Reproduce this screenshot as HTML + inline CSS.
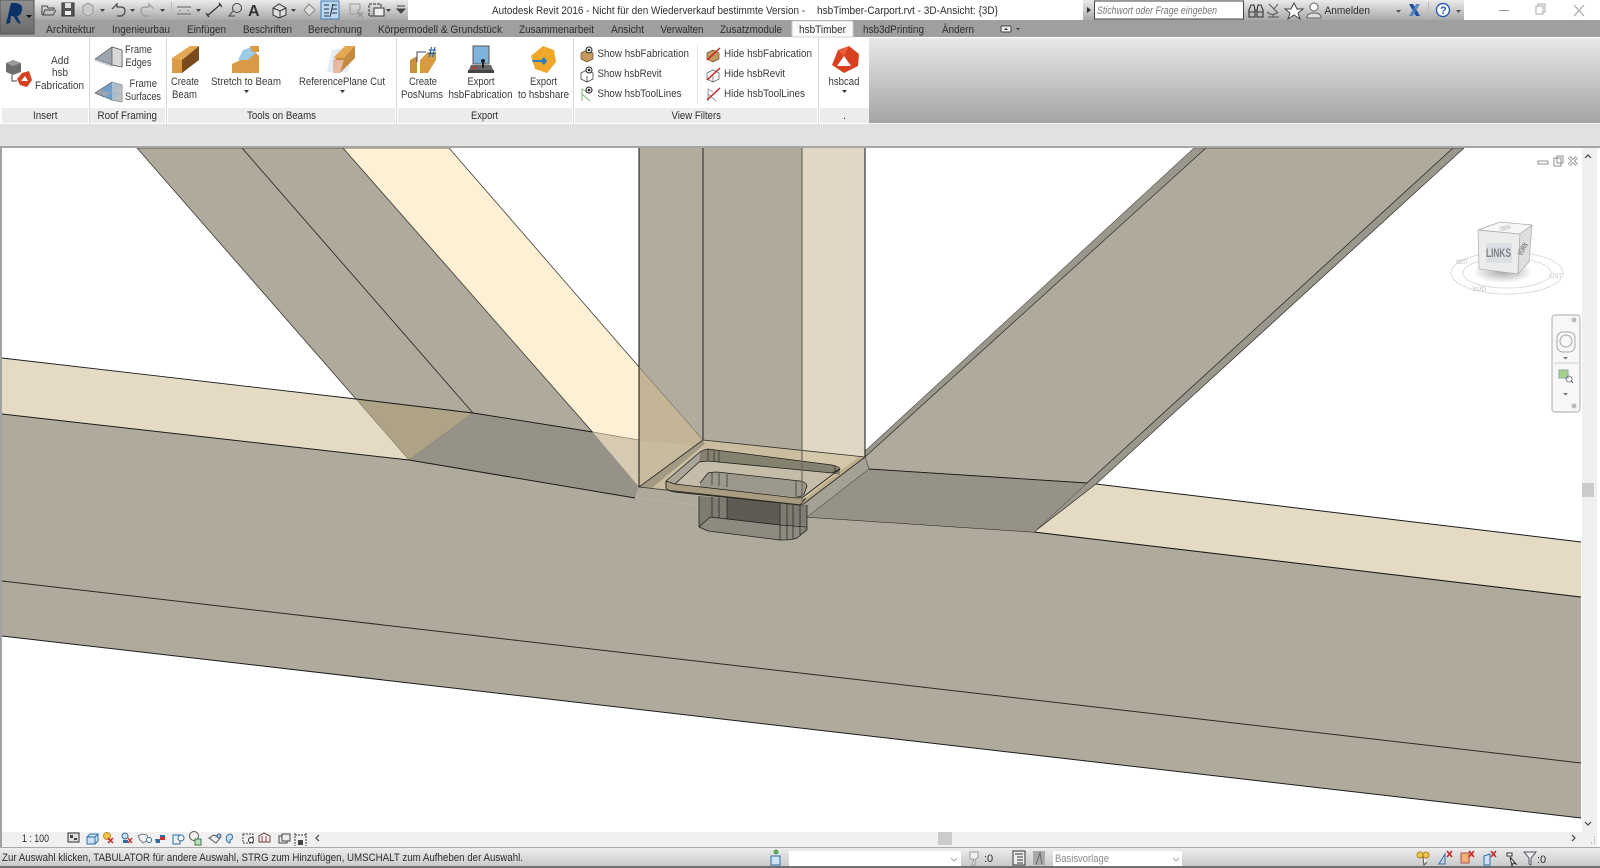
<!DOCTYPE html>
<html lang="de"><head><meta charset="utf-8"><title>Autodesk Revit 2016</title>
<style>
html,body{margin:0;padding:0;width:1600px;height:868px;overflow:hidden;background:#fff}
svg{display:block}
.b{filter:blur(.3px)}
text{font-family:"Liberation Sans",sans-serif;font-size:11px;fill:#3a3a3a}
.t{fill:#2e2e2e}
.l{fill:#555}
.g{stroke:#222;stroke-width:.8;fill:none}
</style></head><body>
<svg width="1600" height="868" viewBox="0 0 1600 868" xmlns="http://www.w3.org/2000/svg">
<defs>
<linearGradient id="qa" x1="0" y1="0" x2="0" y2="1"><stop offset="0" stop-color="#ebebeb"/><stop offset="1" stop-color="#a9a9a9"/></linearGradient>
<linearGradient id="rb" x1="0" y1="0" x2="0" y2="1"><stop offset="0" stop-color="#e8e8e8"/><stop offset="1" stop-color="#a4a4a4"/></linearGradient>
<linearGradient id="st" x1="0" y1="0" x2="0" y2="1"><stop offset="0" stop-color="#efefef"/><stop offset="1" stop-color="#c6c6c6"/></linearGradient>
<linearGradient id="lg" x1="0" y1="0" x2="0" y2="1"><stop offset="0" stop-color="#8f8f8f"/><stop offset="1" stop-color="#6a6a6a"/></linearGradient>
<radialGradient id="sh" cx=".5" cy=".5" r=".5"><stop offset="0" stop-color="#aaa"/><stop offset=".6" stop-color="#ddd"/><stop offset="1" stop-color="#fff"/></radialGradient>
</defs>
<rect width="1600" height="868" fill="#fff"/>

<!-- 3D VIEW -->
<g stroke-linejoin="round">
<polygon points="137,148 343,148 592.5,432 473,413 356,399" fill="#b0aa9c" stroke="#3a3a35" stroke-width=".8"/>
<line x1="242" y1="148" x2="473" y2="413" stroke="#2e2e2a" stroke-width=".9"/>
<polygon points="343,148 449,148 639,367 703,440 697,447 639,487 592.5,432" fill="#fdf0d5" stroke="#45423a" stroke-width=".8"/>
<polygon points="2,358 356,399 409,460 2,414" fill="#e5dac4"/>
<polygon points="356,399 473,413 409,460" fill="#aea287" stroke="#5a5548" stroke-width=".5"/>
<polygon points="473,413 592.5,432 639,487 635,498 409,460" fill="#969288"/>
<polygon points="592.5,432 639,440 639,487" fill="#d6cab3"/>
<polyline points="2,358 356,399 473,413 592.5,432" fill="none" stroke="#1c1c1c" stroke-width=".9"/>
<polyline points="592.5,432 639,440 703,449" fill="none" stroke="#8a8470" stroke-width=".7"/>

<!-- lower beam -->
<polygon points="2,414 409,460 635,498 807,517 1034,532 1581,597 1581,818 2,636" fill="#b0aa9c"/>
<polyline points="2,414 409,460 635,498" fill="none" stroke="#1c1c1c" stroke-width="1"/>
<polyline points="807,517 1034,532 1581,597" fill="none" stroke="#1c1c1c" stroke-width="1"/>
<line x1="2" y1="581" x2="800" y2="673" stroke="#2b2b28" stroke-width="1"/>
<line x1="800" y1="673" x2="1581" y2="763" stroke="#2b2b28" stroke-width="1"/>
<line x1="2" y1="636" x2="800" y2="728" stroke="#1c1c1c" stroke-width="1"/>
<line x1="800" y1="728" x2="1581" y2="818" stroke="#1c1c1c" stroke-width="1"/>

<!-- right rafter -->
<polygon points="1096,484 1581,542 1581,597 1034,532" fill="#e5dac4"/>
<polyline points="1096,484 1581,542" fill="none" stroke="#1c1c1c" stroke-width="1"/>
<polyline points="1034,532 1581,597" fill="none" stroke="#1c1c1c" stroke-width="1"/>
<polygon points="1194,148 1206,148 865,457 864,452" fill="#9b978c" stroke="#55524a" stroke-width=".6"/>
<polygon points="1206,148 1453,148 1087,483 869,469 865,457" fill="#b0aa9c" stroke="#33322d" stroke-width=".7"/>
<polygon points="1453,148 1464,148 1096,484 1034,532 1087,483" fill="#9b978c" stroke="#2e2e2a" stroke-width=".7"/>
<polygon points="869,469 1087,483 1034,532 807,517" fill="#969288"/>
<polyline points="869,469 1087,483" fill="none" stroke="#1c1c1c" stroke-width=".9"/>
<polygon points="802,505 865,457 869,469 807,517" fill="#a5a195" stroke="#55524a" stroke-width=".6"/>

<!-- column -->
<polygon points="639,148 703,148 703,440 639,367" fill="#b2ac9f"/>
<polygon points="639,367 703,440 697,447 639,440" fill="#c3b596"/>
<polygon points="639,440 697,447 639,487" fill="#c9bb9f"/>
<polygon points="703,148 802,148 802,451 703,440" fill="#b0aa9c"/>
<polygon points="802,148 865,148 865,457 802,451" fill="#e1d7c4"/>

<!-- top face -->
<polygon points="703,440 865,457 802,505 639,487" fill="#cbbd9f"/>
<polygon points="802,451 865,457 802,505" fill="#d8ccae" opacity=".7"/>
<polygon points="636,497 639,487 650,491" fill="#8f8f88"/>
<polygon points="635,498 639,487 802,505 807,517" fill="#b0aa9c"/>
<polygon points="639,487 703,440 705,444 652,488" fill="#a39a85"/>
<polygon points="802,505 865,457 860,456 800,502" fill="#bcae8e"/>

<!-- lower hole -->
<polygon points="699,496 807,505 807,530 797,538 780,540 708,531 699,527" fill="#7f7b71"/>
<polygon points="727,498 780,503 780,525 727,519" fill="#5e5b54"/>
<polygon points="699,527 710,517 780,525 807,525 797,538 780,540 708,531" fill="#8e8a80"/>
<path d="M699 527 L708 531 L780 540 Q792 540 797 538 L807 530 V505 M699 496 V527 L710 517 L780 525 L807 527" class="g"/>
<path d="M712 497V517M719 497V518M727 498V519M780 503V540M787 504V540M793 505V539M800 505V535" stroke="#1f1f1d" stroke-width=".7" fill="none"/>

<!-- upper ring -->
<polygon points="666,481 700,452 708,449 832,465 840,469 803,497 797,498 675,484" fill="#c5bcaa"/>
<polygon points="700,452 708,449 832,465 840,469 840,475 832,473 708,461 699,462" fill="#85816f"/>
<polygon points="666,481 700,452 699,462 675,484" fill="#aaa599"/>
<polygon points="700,483 708,473 717,472 800,481 807,485 803,495 797,497 700,487" fill="#9d988c"/>
<path d="M700 483 L708 473 Q712 472 717 472 L800 481 Q806 482 807 486 L804 494 Q801 497 797 497" stroke="#1f1f1d" stroke-width=".8" fill="none"/>
<path d="M712 472V485M719 473V486M727 474V487M796 481V497M802 482V497" stroke="#2e2e2b" stroke-width=".7" fill="none"/>
<polygon points="666,481 675,484 797,498 803,497 806,499 800,505 675,492 666,488" fill="#a99c80"/>
<path d="M666 481 L700 452 Q703 450 708 449 L832 465 Q840 467 840 469 L803 497 Q800 498 797 498 L675 484 Z" fill="none" stroke="#1f1f1d" stroke-width=".8"/>
<path d="M666 481V488Q668 491 675 492L800 505L806 498" fill="none" stroke="#1f1f1d" stroke-width=".9"/>
<path d="M675 484 L699 462 L708 461 L832 473 L840 469" fill="none" stroke="#1f1f1d" stroke-width=".8"/>
<path d="M708 449V461M714 450V461M719 450V462M835 466V474" stroke="#2e2e2b" stroke-width=".7" fill="none"/>

<!-- column edges & base -->
<polyline points="703,440 865,457 802,505 639,487 703,440" fill="none" stroke="#2e2e2a" stroke-width=".8"/>
<line x1="639" y1="148" x2="639" y2="487" stroke="#111" stroke-width="1"/>
<line x1="703" y1="148" x2="703" y2="440" stroke="#222" stroke-width="1"/>
<line x1="802" y1="148" x2="802" y2="505" stroke="#6d695f" stroke-width="1.200"/>
<line x1="865" y1="148" x2="865" y2="457" stroke="#111" stroke-width="1"/>
<line x1="639" y1="367" x2="703" y2="440" stroke="#55524a" stroke-width=".5"/>
</g>

<g class="b">
<!-- view cube -->
<ellipse cx="1507" cy="273" rx="56" ry="21" fill="#fff" stroke="#ccc" stroke-dasharray="2 1"/>
<ellipse cx="1507" cy="273" rx="44" ry="15" fill="#fff" stroke="#ddd"/>
<ellipse cx="1503" cy="272" rx="30" ry="11" fill="url(#sh)"/>
<polygon points="1478,230 1520,234 1518,274 1479,269" fill="#ececec" stroke="#aaa" stroke-width=".7"/>
<polygon points="1478,230 1500,222 1532,225 1520,234" fill="#f6f6f6" stroke="#aaa" stroke-width=".7"/>
<polygon points="1520,234 1532,225 1529,262 1518,274" fill="#dfdfdf" stroke="#aaa" stroke-width=".7"/>
<rect x="1486" y="243" width="26" height="20" fill="#dcdfe3"/>
<text x="1486" y="257" textLength="25" lengthAdjust="spacingAndGlyphs" style="fill:#7d8087;font-size:12px;font-weight:bold">LINKS</text>
<text transform="translate(1522,256) rotate(-62)" textLength="13" lengthAdjust="spacingAndGlyphs" style="fill:#7d8087;font-size:8px;font-weight:bold">VORN</text>
<text transform="translate(1500,231) rotate(-12)" textLength="11" lengthAdjust="spacingAndGlyphs" style="fill:#aaa;font-size:6px">OBEN</text>
<text x="1456" y="264" textLength="12" lengthAdjust="spacingAndGlyphs" style="fill:#bbb;font-size:6px">WEST</text>
<text x="1550" y="278" textLength="12" lengthAdjust="spacingAndGlyphs" style="fill:#bbb;font-size:6px">OST</text>
<text x="1472" y="291" textLength="14" lengthAdjust="spacingAndGlyphs" style="fill:#bbb;font-size:6px">SÜD</text>
<!-- nav bar -->
<rect x="1552" y="315" width="28" height="97" rx="3" fill="#f7f7f7" stroke="#b9b9b9" stroke-width="1.200"/>
<circle cx="1574" cy="320" r="2.500" fill="#bbb"/><circle cx="1574" cy="406" r="2.500" fill="#bbb"/>
<rect x="1557" y="332" width="18" height="20" rx="6" fill="none" stroke="#a8a8a8" stroke-width="1"/>
<circle cx="1566" cy="341" r="6" fill="none" stroke="#a8a8a8"/>
<path d="M1563 357h5l-2.500 2.500zM1563 393h5l-2.500 2.500z" fill="#777"/>
<line x1="1554" y1="363" x2="1578" y2="363" stroke="#ccc"/>
<rect x="1559" y="370" width="9" height="8" fill="#a9d18e" stroke="#8aa"/>
<circle cx="1569" cy="379" r="3" fill="none" stroke="#667" stroke-width=".8"/><line x1="1571" y1="381" x2="1573" y2="383" stroke="#667"/>
<!-- view win controls -->
<rect x="1538" y="161" width="10" height="3" fill="#fff" stroke="#777" stroke-width=".8"/>
<rect x="1554" y="158" width="7" height="8" fill="#fff" stroke="#777" stroke-width=".8"/><rect x="1557" y="156" width="6" height="7" fill="none" stroke="#777" stroke-width=".8"/>
<path d="M1569 157l8 8M1577 157l-8 8" stroke="#777" stroke-width="3"/><path d="M1569 157l8 8M1577 157l-8 8" stroke="#fff" stroke-width="1.400"/>

<!-- scrollbars -->
<rect x="1582" y="148" width="15" height="700" fill="#f0f0f0"/>
<rect x="1582" y="483" width="12" height="14" fill="#cbcbcb"/>
<path d="M1585 158l3-3 3 3M1585 822l3 3 3-3" fill="none" stroke="#444" stroke-width="1.200"/>
<rect x="0" y="832" width="1597" height="15" fill="#f0f0f0"/>
<rect x="938" y="832" width="14" height="13" fill="#cbcbcb"/>
<path d="M1572 835l3 3-3 3" fill="none" stroke="#444" stroke-width="1.200"/>
<path d="M319 835l-3 3 3 3" fill="none" stroke="#444" stroke-width="1.200"/>
<path d="M1591 843h1M1594 843h1M1594 840h1M1594 837h1" stroke="#aaa" stroke-width="1.500"/>
<rect x="0" y="148" width="2" height="700" fill="#a2a2a2"/>
<text x="22" y="842" textLength="27" lengthAdjust="spacingAndGlyphs" class="t">1 : 100</text>

<!-- view control icons -->
<g>
<rect x="68" y="833" width="11" height="9" fill="#ddd" stroke="#333"/><path d="M70 835h3v3h-3zM74 838h3v2h-3z" fill="#444"/>
<path d="M87 837l3-3h8v7l-3 3h-8zM87 837h8v7M95 837l3-3" fill="#cfe3f5" stroke="#2a6fa8"/>
<circle cx="107" cy="836" r="3.500" fill="#f2c54a" stroke="#b9902a"/><path d="M108 838l5 5M113 838l-5 5" stroke="#c22" stroke-width="1.500"/>
<circle cx="125" cy="836" r="3" fill="#cfe3f5" stroke="#2a6fa8"/><path d="M123 840h5v3h-5z" fill="#2a6fa8"/><path d="M128 838l4 5M132 838l-4 5" stroke="#c22" stroke-width="1.300"/>
<path d="M138 836l4-2 5 1 1 5-5 3-3-3z" fill="none" stroke="#778"/><circle cx="149" cy="840" r="2.500" fill="#fff" stroke="#2a6fa8"/>
<path d="M155 839h10v-4h-5v8h-4z" fill="#2a6fa8"/><rect x="160" y="837" width="5" height="3" fill="#c33"/>
<path d="M173 835h7v9h-7z" fill="none" stroke="#2a6fa8"/><circle cx="181" cy="838" r="3" fill="#fff" stroke="#2a6fa8"/>
<circle cx="194" cy="836" r="4.500" fill="none" stroke="#555"/><rect x="195" y="839" width="6" height="6" fill="#bfe0c0" stroke="#3a7a4a"/>
<path d="M209 838l5-3 6 3-4 5z" fill="none" stroke="#555"/><circle cx="219" cy="836" r="2" fill="#bcd" stroke="#357"/>
<path d="M230 834a2.500 3 0 0 1 0 6l0 3a2.500 3 0 0 1 0-9" fill="#cfe3f5" stroke="#2a6fa8"/>
<rect x="243" y="834" width="10" height="9" fill="none" stroke="#444" stroke-dasharray="2 1"/><circle cx="251" cy="840" r="2.500" fill="#fff" stroke="#333"/>
<path d="M259 842v-6l5-3 6 3v6z" fill="none" stroke="#644"/><path d="M262 836v6M266 836v6" stroke="#a44"/>
<rect x="279" y="836" width="8" height="7" fill="none" stroke="#444"/><rect x="282" y="834" width="8" height="7" fill="#eee" stroke="#444"/>
<path d="M295 833v13M306 833v13M295 835h11" fill="none" stroke="#333" stroke-dasharray="2 1"/><rect x="298" y="840" width="5" height="5" fill="#444"/>
</g>

<!-- status bar -->
<rect x="0" y="847" width="1600" height="21" fill="url(#st)"/>
<line x1="0" y1="847.500" x2="1600" y2="847.500" stroke="#a9a9a9"/>
<rect x="0" y="866" width="1600" height="2" fill="#6f6f6f"/>
<text x="2" y="861" textLength="521" lengthAdjust="spacingAndGlyphs" class="t">Zur Auswahl klicken, TABULATOR für andere Auswahl, STRG zum Hinzufügen, UMSCHALT zum Aufheben der Auswahl.</text>
<rect x="789" y="851" width="172" height="15" fill="#fff"/>
<path d="M951 858l3 3 3-3" fill="none" stroke="#aaa"/>
<rect x="1053" y="851" width="129" height="15" fill="#fff"/>
<text x="1055" y="862" textLength="54" lengthAdjust="spacingAndGlyphs" style="fill:#8a8a8a">Basisvorlage</text>
<path d="M1173 858l3 3 3-3" fill="none" stroke="#aaa"/>
<path d="M771 865v-9h9v9z" fill="#cfe3f5" stroke="#2a6fa8"/><circle cx="776" cy="852" r="2.500" fill="#5aa55a"/>
<path d="M970 852h8v5l-3 3v5h-3l2-6h-4z" fill="#f2f2f2" stroke="#999"/>
<text x="984" y="862" class="t">:0</text>
<rect x="1013" y="851" width="12" height="14" fill="#eee" stroke="#333"/><path d="M1015 854h8M1017 857h6M1017 860h6M1017 863h6" stroke="#333"/>
<rect x="1033" y="851" width="12" height="14" fill="#aaa"/><path d="M1036 864l4-11 2 11" fill="none" stroke="#666"/>
<circle cx="1420" cy="855" r="3" fill="#f2c54a" stroke="#a8842a"/><circle cx="1426" cy="855" r="3" fill="#f2c54a" stroke="#a8842a"/><path d="M1423 857l1 8 3-3" fill="#fff" stroke="#555"/>
<path d="M1439 864l6-10v10z" fill="none" stroke="#2a6fa8"/><path d="M1447 851l5 6M1452 851l-5 6" stroke="#c22" stroke-width="1.500"/>
<rect x="1461" y="853" width="8" height="10" fill="#f0b070" stroke="#a55"/><path d="M1469 851l5 6M1474 851l-5 6" stroke="#c22" stroke-width="1.500"/>
<path d="M1484 865v-9l6-2v11z" fill="#cfe3f5" stroke="#2a6fa8"/><path d="M1491 851l5 6M1496 851l-5 6" stroke="#c22" stroke-width="1.500"/>
<path d="M1507 853h5v3h-5zM1510 857l6 7-3-1-1 3z" fill="#fff" stroke="#333"/>
<path d="M1524 852h12l-5 6v7l-2-1v-6z" fill="#eee" stroke="#556"/>
<text x="1537" y="863" class="t">:0</text>

<!-- top chrome -->
<rect x="0" y="124" width="1600" height="22" fill="#e1e1e2"/>
<rect x="0" y="146" width="1600" height="2" fill="#a6a6a6"/>
<rect x="0" y="20" width="1600" height="17" fill="#9f9f9f"/>
<rect x="0" y="37" width="869" height="87" fill="#fff"/>
<rect x="869" y="38" width="731" height="85" fill="url(#rb)"/>
<rect x="869" y="123" width="731" height="1" fill="#f0f0f0"/>

<!-- panel strips -->
<g fill="#ececec">
<rect x="2" y="108" width="86" height="15"/><rect x="90" y="108" width="75" height="15"/><rect x="168" y="108" width="227" height="15"/><rect x="398" y="108" width="174" height="15"/><rect x="575" y="108" width="242" height="15"/><rect x="820" y="108" width="49" height="15"/>
</g>
<path d="M89.500 38v86M166.500 38v86M396.500 38v86M573.500 38v86M818.500 38v86" stroke="#d9d9d9"/>
<line x1="697.500" y1="44" x2="697.500" y2="104" stroke="#e4e4e4"/>

<!-- QAT -->
<rect x="0" y="0" width="408" height="20" fill="url(#qa)"/>
<rect x="0" y="0" width="34" height="34" fill="url(#lg)" stroke="#555"/>
<path d="M6 24L11 3h5q7 1 6 7t-5 6l4 8-3-1-5-7-2 0-1 7z" fill="#0e3268"/>
<path d="M26 15h6l-3 3z" fill="#111"/>
<path d="M42 15V6h5l1 2h6v2h-9l-2 5h10l3-5" fill="none" stroke="#444"/>
<rect x="62" y="3" width="12" height="13" fill="#555" stroke="#333"/><rect x="65" y="3" width="6" height="5" fill="#ddd"/><rect x="65" y="11" width="6" height="4" fill="#eee"/>
<path d="M83 6l5-3 5 3v7l-5 3-5-3z" fill="#ccc" stroke="#999"/>
<path d="M100 9h5l-2.500 3zM130 9h5l-2.500 3zM160 9h5l-2.500 3zM196 9h5l-2.500 3zM291 9h5l-2.500 3zM386 9h5l-2.500 3z" fill="#444"/>
<path d="M112 9l5-5v3h4q4 0 4 4t-4 5h-4" fill="none" stroke="#444" stroke-width="1.200"/>
<path d="M154 9l-5-5v3h-4q-4 0-4 4t4 5h4" fill="none" stroke="#999" stroke-width="1.200"/>
<line x1="171.500" y1="2" x2="171.500" y2="18" stroke="#bbb"/>
<path d="M177 7h14M177 14h14M180 10v1M188 10v1" stroke="#888" stroke-width="1.500"/>
<path d="M207 16l14-12M206 13l3 4M219 3l3 4" stroke="#333" stroke-width="1.200" fill="none"/>
<circle cx="237" cy="8" r="4.500" fill="none" stroke="#444"/><path d="M233 11l-4 5h6" fill="none" stroke="#444"/>
<text x="248" y="16" style="font-size:16px;font-weight:bold;fill:#333">A</text>
<path d="M273 8l6-4 7 4v7l-7 3-6-3z" fill="#ddd" stroke="#333"/><path d="M273 8l7 3 6-3M280 11v7" fill="none" stroke="#333"/>
<path d="M309 4l6 6-6 6-5-6z" fill="#ddd" stroke="#888"/>
<rect x="321" y="1" width="18" height="18" fill="#bcd7ee" stroke="#3e7db5"/>
<path d="M324 5h5M324 9h5M324 13h5M324 16h5M332 5h5M332 9h5M332 13h5M333 4l-3 13" stroke="#234" fill="none"/>
<path d="M350 4h10v6h-2v4h-8z" fill="none" stroke="#999"/><path d="M358 12l5 5M363 12l-5 5" stroke="#888"/>
<rect x="369" y="4" width="12" height="12" fill="none" stroke="#333" stroke-dasharray="3 1"/><rect x="374" y="8" width="10" height="8" fill="#eee" stroke="#333"/>
<path d="M397 6h8M397 9h8l-4 4z" fill="#444" stroke="#444"/>

<!-- title -->
<text x="492" y="14" textLength="313" lengthAdjust="spacingAndGlyphs" class="t">Autodesk Revit 2016 - Nicht für den Wiederverkauf bestimmte Version -</text>
<text x="817" y="14" textLength="181" lengthAdjust="spacingAndGlyphs" class="t">hsbTimber-Carport.rvt - 3D-Ansicht: {3D}</text>

<!-- search -->
<rect x="1083" y="0" width="381" height="20" fill="url(#qa)"/>
<path d="M1087 7l4 3-4 3z" fill="#333"/>
<rect x="1094.500" y="1" width="149" height="18" fill="#fff" stroke="#444"/>
<text x="1097" y="14" textLength="120" lengthAdjust="spacingAndGlyphs" style="font-style:italic;fill:#777">Stichwort oder Frage eingeben</text>
<path d="M1249 17v-7l2-5h3l1 5v7zM1255 10h2M1257 17v-7l1-5h3l2 5v7zM1249 12h6M1257 12h6" fill="none" stroke="#333" stroke-width="1.100"/>
<path d="M1269 4l9 9M1267 12q6 5 11 0M1273 14v3h-5h11M1278 4l-4 5" fill="none" stroke="#555"/>
<path d="M1294 3l3 6h6l-5 4 2 6-6-4-6 4 2-6-5-4h6z" fill="#fff" stroke="#444"/>
<circle cx="1314" cy="7" r="4" fill="#fff" stroke="#666"/><path d="M1307 18q0-5 7-5t7 5z" fill="#ddd" stroke="#666"/>
<text x="1324.500" y="14" textLength="45.500" lengthAdjust="spacingAndGlyphs" class="t">Anmelden</text>
<path d="M1396 10h5l-2.500 3zM1456 10h5l-2.500 3z" fill="#555"/>
<path d="M1409 4h4l7 12h-4z" fill="#1e4d9a"/><path d="M1420 4h-4l-7 12h4z" fill="#4a7cc2" opacity=".85"/>
<line x1="1428.500" y1="2" x2="1428.500" y2="18" stroke="#bbb"/>
<circle cx="1443" cy="10" r="6.500" fill="#fff" stroke="#2a5cb0" stroke-width="1.400"/>
<text x="1440" y="14" style="font-size:11px;font-weight:bold;fill:#2a5cb0">?</text>
<!-- window controls -->
<line x1="1499" y1="10.500" x2="1509" y2="10.500" stroke="#9a9a9a"/>
<rect x="1536" y="6" width="7" height="8" fill="#fff" stroke="#aaa"/><path d="M1538 6V4h7v8h-2" fill="none" stroke="#aaa"/>
<path d="M1574 5l10 11M1584 5l-10 11" stroke="#a2a2a2"/>

<!-- tabs -->
<path d="M792 37V22q0-1 2-1h57q2 0 2 1v15z" fill="#fafafa" stroke="#d0d0d0"/>
<g>
<text x="46" y="33" textLength="49" lengthAdjust="spacingAndGlyphs" class="t">Architektur</text>
<text x="112" y="33" textLength="58" lengthAdjust="spacingAndGlyphs" class="t">Ingenieurbau</text>
<text x="187" y="33" textLength="39" lengthAdjust="spacingAndGlyphs" class="t">Einfügen</text>
<text x="243" y="33" textLength="49" lengthAdjust="spacingAndGlyphs" class="t">Beschriften</text>
<text x="308" y="33" textLength="54" lengthAdjust="spacingAndGlyphs" class="t">Berechnung</text>
<text x="378" y="33" textLength="124" lengthAdjust="spacingAndGlyphs" class="t">Körpermodell &amp; Grundstück</text>
<text x="519" y="33" textLength="75" lengthAdjust="spacingAndGlyphs" class="t">Zusammenarbeit</text>
<text x="611" y="33" textLength="33" lengthAdjust="spacingAndGlyphs" class="t">Ansicht</text>
<text x="660.500" y="33" textLength="43" lengthAdjust="spacingAndGlyphs" class="t">Verwalten</text>
<text x="720" y="33" textLength="62" lengthAdjust="spacingAndGlyphs" class="t">Zusatzmodule</text>
<text x="799" y="33" textLength="47" lengthAdjust="spacingAndGlyphs" class="t">hsbTimber</text>
<text x="863" y="33" textLength="61" lengthAdjust="spacingAndGlyphs" class="t">hsb3dPrinting</text>
<text x="942" y="33" textLength="32" lengthAdjust="spacingAndGlyphs" class="t">Ändern</text>
</g>
<rect x="1001" y="26" width="10" height="6" rx="1" fill="#eee" stroke="#444"/><path d="M1004 30l2-2 2 2z" fill="#333"/><path d="M1016 28h4l-2 2z" fill="#333"/>

<!-- ribbon text -->
<g>
<text x="51" y="64" textLength="18" lengthAdjust="spacingAndGlyphs">Add</text>
<text x="52" y="76" textLength="16" lengthAdjust="spacingAndGlyphs">hsb</text>
<text x="35" y="89" textLength="49" lengthAdjust="spacingAndGlyphs">Fabrication</text>
<text x="125" y="53" textLength="27" lengthAdjust="spacingAndGlyphs">Frame</text>
<text x="125.500" y="66" textLength="26" lengthAdjust="spacingAndGlyphs">Edges</text>
<text x="129.500" y="87" textLength="27.500" lengthAdjust="spacingAndGlyphs">Frame</text>
<text x="125" y="100" textLength="36" lengthAdjust="spacingAndGlyphs">Surfaces</text>
<text x="171" y="85" textLength="28" lengthAdjust="spacingAndGlyphs">Create</text>
<text x="172" y="98" textLength="25" lengthAdjust="spacingAndGlyphs">Beam</text>
<text x="211" y="85" textLength="70" lengthAdjust="spacingAndGlyphs">Stretch to Beam</text>
<text x="299" y="85" textLength="86" lengthAdjust="spacingAndGlyphs">ReferencePlane Cut</text>
<text x="409" y="85" textLength="28" lengthAdjust="spacingAndGlyphs">Create</text>
<text x="401" y="98" textLength="42" lengthAdjust="spacingAndGlyphs">PosNums</text>
<text x="467.500" y="85" textLength="27" lengthAdjust="spacingAndGlyphs">Export</text>
<text x="448.500" y="98" textLength="64" lengthAdjust="spacingAndGlyphs">hsbFabrication</text>
<text x="530" y="85" textLength="27" lengthAdjust="spacingAndGlyphs">Export</text>
<text x="518" y="98" textLength="51" lengthAdjust="spacingAndGlyphs">to hsbshare</text>
<text x="597.500" y="57" textLength="91.500" lengthAdjust="spacingAndGlyphs">Show hsbFabrication</text>
<text x="597.500" y="77" textLength="64" lengthAdjust="spacingAndGlyphs">Show hsbRevit</text>
<text x="597.500" y="97" textLength="84" lengthAdjust="spacingAndGlyphs">Show hsbToolLines</text>
<text x="724" y="57" textLength="88" lengthAdjust="spacingAndGlyphs">Hide hsbFabrication</text>
<text x="724" y="77" textLength="61" lengthAdjust="spacingAndGlyphs">Hide hsbRevit</text>
<text x="724" y="97" textLength="81" lengthAdjust="spacingAndGlyphs">Hide hsbToolLines</text>
<text x="828.500" y="85" textLength="31" lengthAdjust="spacingAndGlyphs">hsbcad</text>
<text x="33" y="119" textLength="24.500" lengthAdjust="spacingAndGlyphs" class="t">Insert</text>
<text x="97.500" y="119" textLength="59.500" lengthAdjust="spacingAndGlyphs" class="t">Roof Framing</text>
<text x="247" y="119" textLength="69" lengthAdjust="spacingAndGlyphs" class="t">Tools on Beams</text>
<text x="471" y="119" textLength="27" lengthAdjust="spacingAndGlyphs" class="t">Export</text>
<text x="671.500" y="119" textLength="49.500" lengthAdjust="spacingAndGlyphs" class="t">View Filters</text>
<text x="843" y="119" class="t">.</text>
</g>
<path d="M244 90h5l-2.500 3zM340 90h5l-2.500 3zM842 90h5l-2.500 3z" fill="#333"/>

<!-- ribbon icons -->
<!-- add -->
<path d="M6 63l7-3 8 3v9l-8 3-7-3z" fill="#6d6d6d"/><path d="M6 63l7 3 8-3-8-3z" fill="#9a9a9a"/>
<path d="M12 75v6h5" fill="none" stroke="#444"/><path d="M17 79l5-6 7-2 3 9-5 7-7-2z" fill="#d9401f"/><path d="M21 81l4-5 3 5z" fill="#fff"/>
<!-- frame edges -->
<path d="M95 59l17-12 10 3v17l-10-2z" fill="#9aa5b0" stroke="#555" stroke-width=".7"/><path d="M95 59l17 6v2l-17-6z" fill="#c8ccd0"/><path d="M112 47l10 3-0 17-10-2z" fill="#d8d8d8" stroke="#555" stroke-width=".7"/>
<!-- frame surfaces -->
<path d="M95 93l17-11 10 3v17l-10-2z" fill="#9aa5b0" stroke="#555" stroke-width=".7"/><path d="M101 90l12-8 8 3-11 8zM104 97l10-6 7 2-8 7z" fill="#6f9fc8"/><path d="M112 82l10 3v17l-10-2z" fill="#d0d0d0" opacity=".6"/>
<!-- create beam -->
<polygon points="172,58 190,46 199,46 182,60" fill="#e2a853"/>
<polygon points="182,60 199,46 199,60 182,73" fill="#7a4a1e"/>
<polygon points="172,58 182,60 182,73 172,73" fill="#d89a42"/>
<!-- stretch -->
<polygon points="232,64 256,53 259,56 259,73 232,73" fill="#d89a42"/>
<polygon points="243,50 254,46 259,50 248,60 238,60" fill="#9ccbe8"/>
<polygon points="250,46 259,46 259,52 252,52" fill="#d89a42"/>
<!-- ref plane -->
<polygon points="332,50 355,46 348,72 327,72" fill="#dbe9f5" opacity=".8"/>
<polygon points="333,61 350,46 355,46 355,58 340,73 333,73" fill="#c58a42"/>
<polygon points="333,58 345,46 355,46 344,58" fill="#e2a853"/>
<polygon points="333,60 344,60 340,73 333,73" fill="#e8b9a0"/>
<!-- posnums -->
<polygon points="410,60 417,56 417,73 410,73" fill="#c8913f"/><polygon points="420,60 428,52 436,52 436,60 428,73 420,73" fill="#d89a42"/>
<path d="M417 62v-10h9" fill="none" stroke="#446"/>
<text x="428" y="57" style="font-size:15px;font-weight:bold;fill:#1f6aa0">#</text>
<!-- export fabrication -->
<rect x="473" y="46" width="16" height="18" fill="#7fb2dc" stroke="#555"/>
<path d="M468 72l3-7h20l3 7z" fill="#666"/><rect x="468" y="70" width="26" height="3" fill="#444"/><path d="M483 62v6" stroke="#222" stroke-width="2"/><circle cx="483" cy="61" r="2" fill="#222"/><rect x="472" y="67" width="5" height="1.500" fill="#c33"/>
<!-- hsbshare -->
<path d="M543 46l11 4 2 12-9 11-12-4-4-13z" fill="#f0a72c"/><path d="M532 60h9l3-3 3 4-3 4-3-3h-8z" fill="#2d7fb8"/>
<!-- hsbcad -->
<path d="M838 50l11-4 10 8-1 12-14 7-12-8z" fill="#d9401f"/><path d="M838 50l11-4-5 10z" fill="#e8603a"/><path d="M837 66l7-10 7 10z" fill="#fff"/>
<!-- show icons -->
<path d="M581 53l6-3 6 3v6l-6 3-6-3z" fill="#c49a5e" stroke="#6a4f2a" stroke-width=".7"/><circle cx="589" cy="50" r="3" fill="#fff" stroke="#222"/><circle cx="589" cy="50" r="1.300" fill="#222"/>
<path d="M581 73l6-3 6 3v6l-6 3-6-3zM587 76v6" fill="#fff" stroke="#444" stroke-width=".8"/><circle cx="589" cy="70" r="3" fill="#fff" stroke="#222"/><circle cx="589" cy="70" r="1.300" fill="#222"/>
<path d="M582 101V89l5 3M582 94l8 7" fill="none" stroke="#7ab87a"/><circle cx="589" cy="90" r="3" fill="#fff" stroke="#222"/><circle cx="589" cy="90" r="1.300" fill="#222"/>
<!-- hide icons -->
<path d="M707 53l6-3 6 3v6l-6 3-6-3z" fill="#c49a5e" stroke="#6a4f2a" stroke-width=".7"/><path d="M707 60l13-12" stroke="#c22" stroke-width="1.500"/>
<path d="M707 73l6-3 6 3v6l-6 3-6-3zM713 76v6" fill="#fff" stroke="#666" stroke-width=".8"/><path d="M707 80l13-12" stroke="#c22" stroke-width="1.500"/>
<path d="M708 101V89l5 3M708 94l8 7" fill="none" stroke="#999"/><path d="M707 100l13-12" stroke="#c22" stroke-width="1.500"/>
</g>
</svg>
</body></html>
